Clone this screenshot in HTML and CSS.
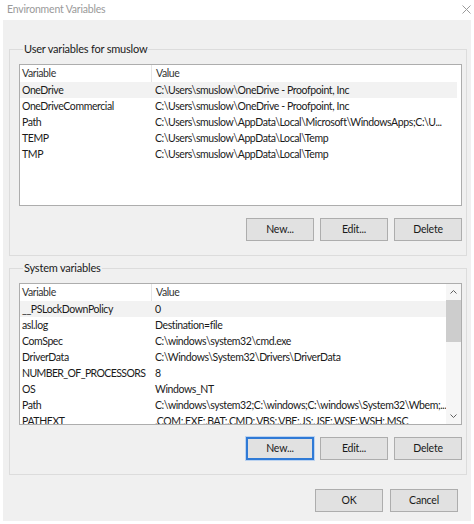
FILE: index.html
```html
<!DOCTYPE html>
<html lang="en">
<head>
    <meta charset="UTF-8">
    <title>Environment Variables</title>
    <link rel="stylesheet" href="styles.css">
</head>
<body>

    <div class="titlebar">
        <span class="title">Environment Variables</span>
        <svg class="close" width="9" height="9" viewBox="0 0 9 9">
            <path d="M0.5 0.5 L8.5 8.5 M8.5 0.5 L0.5 8.5" stroke="#9a9a9a" stroke-width="1" fill="none"/>
        </svg>
    </div>

    <div class="dialog">
        <fieldset class="group group-user">
            <legend>User variables for smuslow</legend>
            <div class="list">
                <div class="row head"><span>Variable</span><span class="val">Value</span></div>
                <div class="row sel"><span>OneDrive</span><span class="val">C:\Users\smuslow\OneDrive - Proofpoint, Inc</span></div>
                <div class="row"><span>OneDriveCommercial</span><span class="val">C:\Users\smuslow\OneDrive - Proofpoint, Inc</span></div>
                <div class="row"><span>Path</span><span class="val">C:\Users\smuslow\AppData\Local\Microsoft\WindowsApps;C:\U...</span></div>
                <div class="row"><span>TEMP</span><span class="val">C:\Users\smuslow\AppData\Local\Temp</span></div>
                <div class="row"><span>TMP</span><span class="val">C:\Users\smuslow\AppData\Local\Temp</span></div>
            </div>
            <div class="buttons">
                <div class="btn">New...</div>
                <div class="btn">Edit...</div>
                <div class="btn">Delete</div>
            </div>
        </fieldset>

        <fieldset class="group group-system">
            <legend>System variables</legend>
            <div class="list list-scroll">
                <div class="rows">
                    <div class="row head"><span>Variable</span><span class="val">Value</span></div>
                    <div class="row sel"><span>__PSLockDownPolicy</span><span class="val">0</span></div>
                    <div class="row"><span>asl.log</span><span class="val">Destination=file</span></div>
                    <div class="row"><span>ComSpec</span><span class="val">C:\windows\system32\cmd.exe</span></div>
                    <div class="row"><span>DriverData</span><span class="val">C:\Windows\System32\Drivers\DriverData</span></div>
                    <div class="row"><span class="tight">NUMBER_OF_PROCESSORS</span><span class="val">8</span></div>
                    <div class="row"><span>OS</span><span class="val">Windows_NT</span></div>
                    <div class="row"><span>Path</span><span class="val">C:\windows\system32;C:\windows;C:\windows\System32\Wbem;...</span></div>
                    <div class="row"><span>PATHEXT</span><span class="val">.COM;.EXE;.BAT;.CMD;.VBS;.VBE;.JS;.JSE;.WSF;.WSH;.MSC</span></div>
                </div>
                <div class="scrollbar">
                    <svg class="arrow" width="7" height="4" viewBox="0 0 7 4"><path d="M0.5 3.5 L3.5 0.5 L6.5 3.5" stroke="#606060" fill="none"/></svg>
                    <div class="track"><div class="thumb"></div></div>
                    <svg class="arrow" width="7" height="4" viewBox="0 0 7 4"><path d="M0.5 0.5 L3.5 3.5 L6.5 0.5" stroke="#606060" fill="none"/></svg>
                </div>
            </div>
            <div class="buttons">
                <div class="btn focus">New...</div>
                <div class="btn">Edit...</div>
                <div class="btn">Delete</div>
            </div>
        </fieldset>

        <div class="footer">
            <div class="btn">OK</div>
            <div class="btn">Cancel</div>
        </div>
    </div>

</body>
</html>
```

FILE: styles.css
```css
* {
    margin: 0;
    padding: 0;
    box-sizing: border-box;
}

body {
    font-family: Lato, "Open Sans", sans-serif;
    font-size: 10.5px;
    letter-spacing: -0.4px;
    color: #1a1a1a;
    background: #fff;
    width: 474px;
    height: 524px;
}

.titlebar {
    height: 20px;
    display: flex;
    align-items: center;
    justify-content: space-between;
    padding: 0 3px 2px 7px;
}

.title {
    color: #9a9a9a;
    font-size: 10.5px;
    letter-spacing: -0.2px;
}

.dialog {
    margin: 0 3px;
    height: 501px;
    background: #f0f0f0;
    padding-top: 21px;
}

.group {
    border: 1px solid #dcdcdc;
    margin: 0 4px 0 6px;
    padding: 7px 4px 14px 9px;
    min-width: 0;
}

.group legend {
    margin-left: 4px;
    padding: 0 1px;
    line-height: 16px;
    font-size: 11px;
    letter-spacing: -0.2px;
}

.group-system {
    margin-top: 4px;
    padding-top: 7px;
}

.list {
    height: 142px;
    background: #fff;
    border: 1px solid #adadad;
    overflow: hidden;
}

.row {
    display: grid;
    grid-template-columns: 131px 1fr;
    height: 16px;
    line-height: 16px;
    white-space: nowrap;
    margin-right: 4px;
}

.row span {
    padding-left: 2px;
    overflow: hidden;
}

.row .tight {
    letter-spacing: -0.6px;
}

.row .val {
    padding-left: 4px;
}

.row.head {
    height: 17px;
    line-height: 17px;
    color: #333;
}

.row.head span + span {
    border-left: 1px solid #e5e5e5;
}

.row.sel {
    background: #f2f2f2;
}

.list-scroll {
    display: flex;
}

.rows {
    flex: 1;
    min-width: 0;
}

.list-scroll .row {
    margin-right: 0;
}

.scrollbar {
    width: 15px;
    background: #f6f6f6;
    display: flex;
    flex-direction: column;
    align-items: center;
}

.arrow {
    margin: 6px 0;
}

.track {
    flex: 1;
    width: 100%;
}

.thumb {
    margin-top: 0;
    height: 42px;
    background: #cdcdcd;
}

.buttons {
    display: flex;
    justify-content: flex-end;
    gap: 6px;
    margin-top: 12px;
}

.btn {
    width: 68px;
    height: 23px;
    line-height: 21px;
    text-align: center;
    background: #e1e1e1;
    border: 1px solid #adadad;
    font-size: 10.5px;
    letter-spacing: -0.2px;
    color: #1a1a1a;
}

.btn.focus {
    border: 2px solid #2f7ad6;
    line-height: 19px;
    box-shadow: 0 0 0 1px #bcd3f0;
}

.footer {
    display: flex;
    justify-content: flex-end;
    gap: 7px;
    padding: 14px 13px 0 0;
}
```
